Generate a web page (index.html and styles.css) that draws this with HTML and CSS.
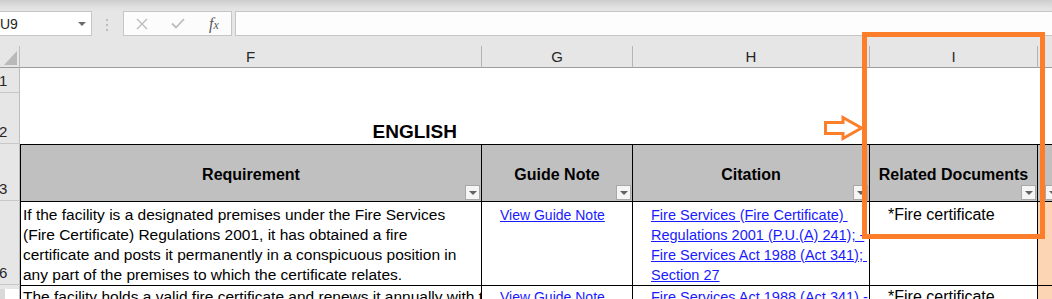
FILE: index.html
```html
<!DOCTYPE html>
<html lang="en">
<head>
<meta charset="UTF-8">
<meta name="viewport" content="width=device-width, initial-scale=1.0">
<link rel="stylesheet" href="styles.css">
</head>
<body>
    <div class="formula-bar">
        <div class="name-box"><span>U9</span><span class="caret"></span></div>
        <div class="grip"><i></i><i></i><i></i></div>
        <div class="fx-buttons">
            <span class="fx-slot">
                <svg width="12" height="12" viewBox="0 0 12 12"><path d="M1 1L11 11M11 1L1 11" stroke="#bdbdbd" stroke-width="1.4" fill="none"/></svg>
            </span>
            <span class="fx-slot">
                <svg width="14" height="11" viewBox="0 0 14 11"><path d="M1 5.5L5 9.5L13 1" stroke="#bdbdbd" stroke-width="1.8" fill="none"/></svg>
            </span>
            <span class="fx-slot fx">f<small>x</small></span>
        </div>
        <div class="formula-input"></div>
    </div>

    <div class="sheet">
        <!-- column letters -->
        <div class="corner"><span class="corner-mark"></span></div>
        <div class="col-head first">F</div>
        <div class="col-head">G</div>
        <div class="col-head">H</div>
        <div class="col-head">I</div>
        <div class="col-head"></div>

        <!-- row 1 -->
        <div class="row-head">1</div>
        <div class="blank span-all"></div>

        <!-- row 2 -->
        <div class="row-head">2</div>
        <div class="title-cell">ENGLISH</div>
        <div class="blank span-rest"></div>

        <!-- row 3 -->
        <div class="row-head">3</div>
        <div class="hdr">Requirement<span class="filter"></span></div>
        <div class="hdr">Guide Note<span class="filter"></span></div>
        <div class="hdr">Citation<span class="filter"></span></div>
        <div class="hdr">Related Documents<span class="filter"></span></div>
        <div class="hdr"><span class="filter left"></span></div>

        <!-- row 6 -->
        <div class="row-head">6</div>
        <div class="cell req">If the facility is a designated premises under the Fire Services<br>(Fire Certificate) Regulations 2001, it has obtained a fire<br>certificate and posts it permanently in a conspicuous position in<br>any part of the premises to which the certificate relates.</div>
        <div class="cell indent note"><a href="#">View Guide Note</a></div>
        <div class="cell indent cite"><a href="#">Fire Services (Fire Certificate)&nbsp;<br>Regulations 2001 (P.U.(A) 241); -<br>Fire Services Act 1988 (Act 341);&nbsp;<br>Section 27</a></div>
        <div class="cell indent docs">*Fire certificate</div>
        <div class="cell peach"></div>

        <!-- row 7 -->
        <div class="row-head cut"></div>
        <div class="cell req next">The facility holds a valid fire certificate and renews it annually with the</div>
        <div class="cell indent note next"><a href="#">View Guide Note</a></div>
        <div class="cell indent cite next"><a href="#">Fire Services Act 1988 (Act 341) -</a></div>
        <div class="cell indent docs next">*Fire certificate</div>
        <div class="cell peach next"></div>
    </div>

    <div class="highlight"></div>
    <svg class="arrow" width="44" height="28" viewBox="0 0 44 28">
        <path d="M3.5 8.5H21V3.5L39.5 14L21 24.5V19.5H3.5Z" fill="none" stroke="#fd7e2a" stroke-width="3" stroke-linejoin="miter"/>
    </svg>
</body>
</html>
```

FILE: styles.css
```css
* {
    margin: 0;
    padding: 0;
    box-sizing: border-box;
}

body {
    width: 1052px;
    height: 299px;
    overflow: hidden;
    position: relative;
    background-color: #e6e6e6;
    font-family: "Liberation Sans", Arial, sans-serif;
    color: #000;
}

/* formula bar */
.formula-bar {
    height: 46px;
    padding-top: 11px;
    display: flex;
    align-items: flex-start;
    background: linear-gradient(#cdcdcd, #e2e2e2 8px, #e6e6e6 12px);
}

.name-box {
    width: 93px;
    height: 25px;
    margin-left: -1px;
    padding-right: 5px;
    border: 1px solid #c6c6c6;
    background-color: #fff;
    display: flex;
    align-items: center;
    justify-content: space-between;
    font-size: 14px;
    color: #1f1f1f;
}

.caret {
    width: 0;
    height: 0;
    border-left: 4px solid transparent;
    border-right: 4px solid transparent;
    border-top: 4px solid #6b6b6b;
}

.grip {
    width: 30px;
    height: 25px;
    padding-top: 8px;
    display: flex;
    flex-direction: column;
    align-items: center;
    gap: 3px;
}

.grip i {
    width: 2px;
    height: 2px;
    background-color: #bcbcbc;
}

.fx-buttons {
    width: 109px;
    height: 25px;
    margin-left: 1px;
    border: 1px solid #c6c6c6;
    background-color: #fcfcfc;
    display: flex;
    align-items: center;
}

.fx-slot {
    flex: none;
    width: 36px;
    display: flex;
    justify-content: center;
}

.fx {
    font-family: "Liberation Serif", serif;
    font-style: italic;
    font-size: 16px;
    color: #5a5a5a;
}

.fx small {
    font-size: 12px;
    margin-top: 3px;
}

.formula-input {
    flex: 1;
    height: 25px;
    margin-left: 3px;
    margin-right: -1px;
    border: 1px solid #c6c6c6;
    background-color: #fdfdfd;
}

/* sheet grid */
.sheet {
    display: grid;
    grid-template-columns: 20px 461px 151px 237px 168px 1fr;
    grid-template-rows: 22px 25px 51px 57px 84px 40px;
}

.corner {
    border-right: 1px solid #bdbdbd;
    border-bottom: 1px solid #9c9c9c;
    display: flex;
    justify-content: flex-end;
    align-items: flex-end;
    padding: 0 2px 2px 0;
}

.corner-mark {
    width: 0;
    height: 0;
    border-left: 13px solid transparent;
    border-bottom: 14px solid #b9b9b9;
}

.col-head {
    border-left: 1px solid #b4b4b4;
    border-bottom: 1px solid #9c9c9c;
    display: flex;
    align-items: center;
    justify-content: center;
    font-size: 15px;
    color: #262626;
}

.col-head.first {
    border-left: none;
}

.row-head {
    border-right: 1px solid #bdbdbd;
    border-bottom: 1px solid #c8c8c8;
    display: flex;
    align-items: flex-end;
    padding-bottom: 2px;
    text-indent: -1px;
    font-size: 15px;
    line-height: 18px;
    color: #262626;
}

.row-head.cut {
    border-bottom: none;
    background: linear-gradient(#e6e6e6 4px, transparent 4px),
                linear-gradient(90deg, #d9d9d9 5px, #fff 5px);
}

.blank {
    background-color: #fff;
}

.span-all {
    grid-column: 2 / -1;
}

.span-rest {
    grid-column: 3 / -1;
}

.title-cell {
    background-color: #fff;
    display: flex;
    align-items: flex-end;
    justify-content: flex-end;
    padding: 0 24px 3px 0;
    font-size: 19px;
    line-height: 19px;
    font-weight: bold;
}

.hdr {
    position: relative;
    background-color: #c0c0c0;
    border-left: 1px solid #000;
    border-top: 1px solid #000;
    display: flex;
    align-items: center;
    justify-content: center;
    padding-top: 3px;
    font-size: 16px;
    font-weight: bold;
}

.filter {
    position: absolute;
    right: 1px;
    bottom: 1px;
    width: 15px;
    height: 15px;
    border: 1px solid #a8a8a8;
    background-color: #f5f5f5;
    display: flex;
    align-items: center;
    justify-content: center;
}

.filter.left {
    right: auto;
    left: 7px;
}

.filter::after {
    content: "";
    width: 0;
    height: 0;
    border-left: 4px solid transparent;
    border-right: 4px solid transparent;
    border-top: 4px solid #636363;
}

.cell {
    background-color: #fff;
    border-left: 1px solid #000;
    border-top: 1px solid #000;
    padding: 3px 0 0 2px;
    font-size: 15px;
    line-height: 20px;
    white-space: nowrap;
    overflow: hidden;
}

.cell.req {
    font-size: 15.5px;
}

.cell.note {
    font-size: 14px;
}

.cell.cite {
    font-size: 14.5px;
}

.cell.docs {
    font-size: 16px;
}

.cell.next {
    padding-top: 1px;
}

.indent {
    padding-left: 18px;
}

.cell a {
    color: #1a1aff;
    text-decoration: underline;
}

.peach {
    background-color: #fcd5b4;
}

/* annotation drawn over the sheet */
.highlight {
    position: absolute;
    left: 862px;
    top: 32px;
    width: 183px;
    height: 207px;
    border: 5px solid #fd7e2a;
}

.arrow {
    position: absolute;
    left: 822px;
    top: 114px;
}
```
